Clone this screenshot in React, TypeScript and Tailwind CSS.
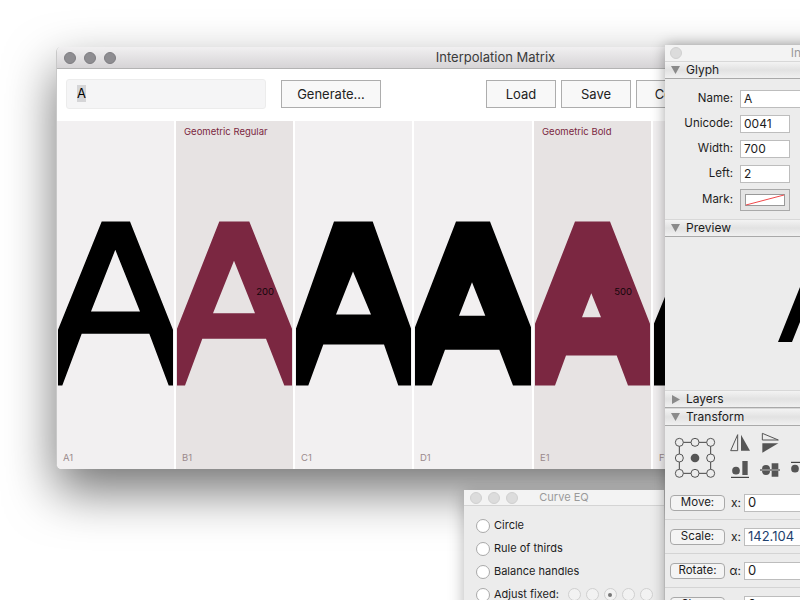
const FONT = 'font-[Inter,"Liberation_Sans",sans-serif]';

interface Master {
  code: string;
  left: number;
  width: string;
  selected?: boolean;
  name?: string;
  weight?: string;
  outer: string;
  counter: string;
}

const MASTERS: Master[] = [
  {
    code: 'A1', left: 57, width: 'w-[117px]',
    outer: '101.7,221 130,221 173,329.3 173,385 168.7,385 149.3,333.3 81.7,333.3 62.3,385 58,385 58,329.3',
    counter: '115.3,249.3 91,311 140,311',
  },
  {
    code: 'B1', left: 176, width: 'w-[117px]', selected: true, name: 'Geometric Regular', weight: '200',
    outer: '219.3,221 249.3,221 292,328.3 292,385 284.3,385 266,338.3 202.3,338.3 185,385 177,385 177,328.3',
    counter: '234,260.3 213,312.7 255,312.7',
  },
  {
    code: 'C1', left: 295, width: 'w-[117px]',
    outer: '334,221 372.7,221 411,328 411,385 398.3,385 384,344 323.3,344 308.3,385 296,385 296,328',
    counter: '353,271 336,314 371,314',
  },
  {
    code: 'D1', left: 414, width: 'w-[118px]',
    outer: '456,221 490,221 531,326.7 531,385 513,385 499.3,349.3 445,349.3 431.7,385 415,385 415,326.7',
    counter: '472,281.7 459,315.3 485.3,315.3',
  },
  {
    code: 'E1', left: 534, width: 'w-[117px]', selected: true, name: 'Geometric Bold', weight: '500',
    outer: '575,221 610,221 650,323.3 650,385 628,385 616.7,355 566,355 555,385 535,385 535,323.3',
    counter: '591.3,292.7 582,316.7 601,316.7',
  },
  {
    code: 'F1', left: 653, width: 'w-[117px]',
    outer: '696,221 730,221 770,323 770,385 750,385 738,355 686,355 674,385 654,385 654,323',
    counter: '712,293 703,317 722,317',
  },
];

function Light({ className }: { className: string }) {
  return <span className={`block w-3 h-3 rounded-full ${className}`} />;
}

function MatrixCell({ m }: { m: Master }) {
  return (
    <div className={`relative shrink-0 flex flex-col justify-between px-[6px] pb-[5px] pt-[5px] ${m.width} ${m.selected ? 'bg-[#e7e3e3]' : 'bg-[#f2f0f1]'}`}>
      <svg className="absolute inset-0 w-full h-full" viewBox={`${m.left} 121 ${m.width === 'w-[118px]' ? 118 : 117} 347`}>
        <path
          fillRule="evenodd"
          fill={m.selected ? '#7b2741' : '#000'}
          d={`M${m.outer}Z M${m.counter}Z`}
        />
      </svg>
      <span className="relative h-[12px] pl-[2px] text-[9.5px] leading-[12px] text-[#7b2741]">{m.name}</span>
      {m.weight && (
        <span className="absolute top-[165px] right-[19px] text-[9.5px] leading-[12px] text-[#14060b]">{m.weight}</span>
      )}
      <span className="relative text-[9.5px] leading-[12px] text-[#9b8a8c]">{m.code}</span>
    </div>
  );
}

function ToolButton({ label, className }: { label: string; className: string }) {
  return (
    <button className={`h-[28px] pt-[2px] shrink-0 border border-[#adadad] bg-[#f8f8f8] text-[13px] text-[#222] ${className}`}>{label}</button>
  );
}

function Section({ label, open = true }: { label: string; open?: boolean }) {
  return (
    <div className="flex items-center h-[18px] pl-[6px] gap-[6px] bg-gradient-to-b from-[#f3f3f3] via-[#e2e2e2] to-[#f0f0f0] border-t border-b border-t-[#d8d8d8] border-b-[#a9a9a9] text-[12px] text-[#1c1c1c]">
      {open ? (
        <svg width="9" height="8" viewBox="0 0 9 8"><path d="M0 0H9L4.5 8Z" fill="#8a8a8a" /></svg>
      ) : (
        <svg width="8" height="9" viewBox="0 0 8 9" className="ml-[1px]"><path d="M0 0V9L8 4.5Z" fill="#8a8a8a" /></svg>
      )}
      <span>{label}</span>
    </div>
  );
}

function Field({ label, value, wide }: { label: string; value: string; wide?: boolean }) {
  return (
    <div className="flex items-center gap-[7px] h-[25px] text-[11.5px] text-[#1c1c1c]">
      <span className="w-[68px] text-right">{label}</span>
      <span className={`h-[18px] flex items-center px-[3px] pt-[1px] bg-white border border-[#bdbdbd] text-[12px] ${wide ? 'w-[200px]' : 'w-[50px]'}`}>{value}</span>
    </div>
  );
}

function TransformRow({ action, axis, value, blue }: { action: string; axis: string; value: string; blue?: boolean }) {
  return (
    <div className="flex items-center h-[34px] pl-[5px] border-b border-[#d4d4d4] text-[12px] text-[#1c1c1c]">
      <span className="w-[55px] h-[16px] mt-[1px] shrink-0 flex items-center justify-center rounded-[4px] border border-[#a8a8a8] bg-[#f4f4f4] text-[11.5px]">{action}</span>
      <span className="w-[19px] shrink-0 text-right pr-[3px]">{axis}</span>
      <span className={`w-[200px] h-[18px] flex items-center px-[3px] pt-[1px] bg-white border border-[#bdbdbd] text-[13px] ${blue ? 'text-[#1d3f6e]' : ''}`}>{value}</span>
    </div>
  );
}

function Radio({ label, children }: { label: string; children?: React.ReactNode }) {
  return (
    <div className="flex items-center h-[23px] gap-[4px] text-[11px] text-[#1c1c1c]">
      <span className="w-[14px] h-[14px] rounded-full bg-white border border-[#a9a9a9]" />
      <span>{label}</span>
      {children}
    </div>
  );
}

function TransformIcons() {
  const dots = [
    [43, 37], [90, 37], [137, 37],
    [43, 84], [137, 84],
    [43, 130], [90, 130], [137, 130],
  ];
  return (
    <svg width="135" height="60" viewBox="0 0 405 180" className="mt-[4px] -mb-[4px] shrink-0">
      <path d="M43 37H137V130H43Z" fill="none" stroke="#444" strokeWidth="3" />
      {dots.map(([x, y]) => (
        <circle key={`${x}-${y}`} cx={x} cy={y} r="12" fill="#ececec" stroke="#555" strokeWidth="3" />
      ))}
      <circle cx="90" cy="84" r="13" fill="#555" />
      <path d="M197 62L218 14V62Z" fill="none" stroke="#555" strokeWidth="3" />
      <path d="M228 14V62H255Z" fill="#555" />
      <path d="M292 10L340 30H292Z" fill="none" stroke="#555" strokeWidth="3" />
      <path d="M292 40H340L292 68Z" fill="#555" />
      <circle cx="213" cy="122" r="11.5" fill="#555" />
      <rect x="232" y="93" width="16" height="42" fill="#555" />
      <path d="M198 142H252" stroke="#222" strokeWidth="3" />
      <path d="M291 117a12 12 0 0 1 24 0ZM291 123a12 12 0 0 0 24 0Z" fill="#555" />
      <path d="M320 100H340V117H320ZM320 123H340V140H320Z" fill="#555" />
      <path d="M285 120H345" stroke="#222" strokeWidth="3" />
      <circle cx="390" cy="116" r="11.5" fill="#555" />
      <rect x="405" y="100" width="20" height="40" fill="#555" />
      <path d="M378 97H425" stroke="#222" strokeWidth="3" />
    </svg>
  );
}

function MatrixWindow() {
  return (
    <div className="absolute left-[56px] top-[47px] w-[878px] h-[422px] flex flex-col rounded-[5px] overflow-hidden bg-white border-l border-[#c8c8c8] shadow-[0_22px_50px_rgba(0,0,0,0.55)]">
      <div className="relative h-[22px] shrink-0 flex items-center gap-[8px] pl-[7px] bg-gradient-to-b from-[#f1f0f1] to-[#d6d4d6] border-b border-[#b3b3b3]">
        <Light className="bg-[#8e8d91] border border-[#7e7d81]" />
        <Light className="bg-[#8e8d91] border border-[#7e7d81]" />
        <Light className="bg-[#8e8d91] border border-[#7e7d81]" />
        <span className="absolute inset-x-0 text-center text-[13px] text-[#3a3a3a]">Interpolation Matrix</span>
      </div>
      <div className="h-[52px] shrink-0 flex items-center pl-[9px] pb-[2px]">
        <div className="w-[200px] h-[30px] flex items-center pl-[10px] rounded-[3px] bg-[#f5f5f6] border border-[#ececec] text-[13px] text-black">
          <span className="bg-[#d5d5d7] mb-[2px] leading-[17px]">A</span>
        </div>
        <ToolButton label="Generate…" className="w-[100px] ml-[15px]" />
        <ToolButton label="Load" className="w-[70px] ml-[105px]" />
        <ToolButton label="Save" className="w-[70px] ml-[5px]" />
        <ToolButton label="Copy" className="w-[70px] ml-[5px]" />
      </div>
      <div className="flex-1 flex gap-[2px] min-h-0">
        {MASTERS.map((m) => <MatrixCell key={m.code} m={m} />)}
      </div>
    </div>
  );
}

function CurveWindow() {
  return (
    <div className="absolute left-[464px] top-[490px] w-[200px] h-[140px] rounded-t-[4px] bg-[#ececec] shadow-[0_4px_16px_rgba(0,0,0,0.3)]">
      <div className="relative h-[16px] flex items-center gap-[6px] pl-[6px] bg-[#f3f3f3] border-b border-[#d4d4d4]">
        <Light className="bg-[#dcdcdc] border border-[#d0d0d0]" />
        <Light className="bg-[#dcdcdc] border border-[#d0d0d0]" />
        <Light className="bg-[#dcdcdc] border border-[#d0d0d0]" />
        <span className="absolute inset-x-0 text-center text-[11px] text-[#9a9a9a]">Curve EQ</span>
      </div>
      <div className="flex flex-col pl-[12px] pt-[8px]">
        <Radio label="Circle" />
        <Radio label="Rule of thirds" />
        <Radio label="Balance handles" />
        <Radio label="Adjust fixed:">
          <div className="flex gap-[5px] ml-[5px]">
            {[0, 1, 2, 3, 4].map((i) => (
              <span key={i} className="w-[13px] h-[13px] flex items-center justify-center rounded-full bg-[#f2f2f2] border border-[#d0d0d0]">
                {i === 2 && <span className="w-[4px] h-[4px] rounded-full bg-[#777]" />}
              </span>
            ))}
          </div>
        </Radio>
      </div>
    </div>
  );
}

function InspectorWindow() {
  return (
    <div className="absolute left-[665px] top-[45px] w-[305px] h-[600px] flex flex-col rounded-t-[4px] bg-[#ececec] shadow-[0_0_14px_rgba(0,0,0,0.35)]">
      <div className="relative h-[16px] shrink-0 flex items-center pl-[5px] bg-[#f3f3f3]">
        <Light className="bg-[#dcdcdc] border border-[#d0d0d0]" />
        <span className="absolute inset-x-0 text-center text-[12px] text-[#9a9a9a]">Inspector</span>
      </div>
      <Section label="Glyph" />
      <div className="flex flex-col h-[140px] pt-[7px] shrink-0">
        <Field label="Name:" value="A" wide />
        <Field label="Unicode:" value="0041" />
        <Field label="Width:" value="700" />
        <Field label="Left:" value="2" />
        <div className="flex items-center gap-[7px] h-[25px] mt-[1px] text-[11.5px] text-[#1c1c1c]">
          <span className="w-[68px] text-right">Mark:</span>
          <span className="w-[50px] h-[22px] flex items-center justify-center border border-[#a9a9a9] bg-[#e4e4e4]">
            <svg width="40" height="12" viewBox="0 0 40 12">
              <rect x="0.5" y="0.5" width="39" height="11" fill="#fff" stroke="#999" />
              <path d="M1 11L39 1" stroke="#f0484a" strokeWidth="1" />
            </svg>
          </span>
        </div>
      </div>
      <Section label="Preview" />
      <div className="relative h-[153px] shrink-0 overflow-hidden">
        <svg className="absolute left-[100px] top-[40px]" width="60" height="80" viewBox="0 0 60 80">
          <path d="M13 65H27L35 45V10Z" fill="#000" />
        </svg>
      </div>
      <Section label="Layers" open={false} />
      <Section label="Transform" />
      <TransformIcons />
      <TransformRow action="Move:" axis="x:" value="0" />
      <TransformRow action="Scale:" axis="x:" value="142.104" blue />
      <TransformRow action="Rotate:" axis="α:" value="0" />
      <TransformRow action="Skew:" axis="α:" value="0" />
    </div>
  );
}

export default function App() {
  return (
    <div className={`relative w-[800px] h-[600px] overflow-hidden bg-white ${FONT}`}>
      <MatrixWindow />
      <CurveWindow />
      <InspectorWindow />
    </div>
  );
}
